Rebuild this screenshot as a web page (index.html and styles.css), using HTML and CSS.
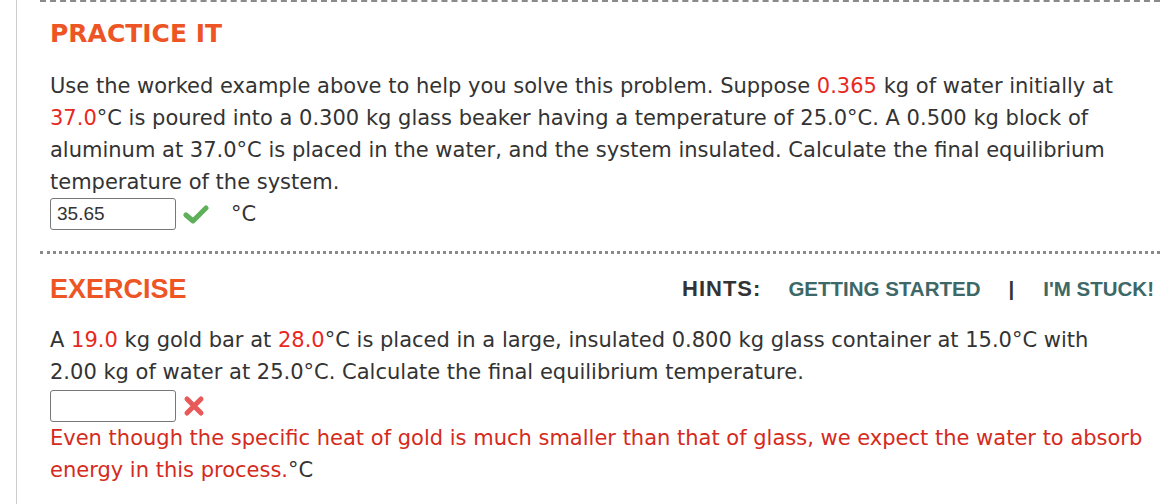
FILE: index.html
```html
<!DOCTYPE html>
<html>
<head>
<meta charset="utf-8">
<link rel="stylesheet" href="styles.css">
</head>
<body>
<div class="wrap">
  <section class="block practice">
    <h2 class="title">PRACTICE IT</h2>
    <p class="text">Use the worked example above to help you solve this problem. Suppose <span class="num">0.365</span> kg of water initially at <span class="num">37.0</span>°C is poured into a 0.300 kg glass beaker having a temperature of 25.0°C. A 0.500 kg block of aluminum at 37.0°C is placed in the water, and the system insulated. Calculate the final equilibrium temperature of the system.</p>
    <div class="answer">
      <div class="input">35.65</div>
      <svg class="icon" width="26" height="20" viewBox="0 0 26 20"><path d="M3 11 L10 17 L23 4" fill="none" stroke="#5fb05a" stroke-width="5" stroke-linecap="round" stroke-linejoin="round"/></svg>
      <span class="unit">°C</span>
    </div>
  </section>
  <section class="block exercise">
    <div class="head">
      <h2 class="title ex">EXERCISE</h2>
      <div class="hints">
        <span class="hl">HINTS:</span>
        <span class="hint">GETTING STARTED</span>
        <span class="sep">|</span>
        <span class="hint">I'M STUCK!</span>
      </div>
    </div>
    <p class="text">A <span class="num">19.0</span> kg gold bar at <span class="num">28.0</span>°C is placed in a large, insulated 0.800 kg glass container at 15.0°C with 2.00 kg of water at 25.0°C. Calculate the final equilibrium temperature.</p>
    <div class="answer">
      <div class="input"></div>
      <svg class="icon x" width="22" height="22" viewBox="0 0 22 22"><path d="M4 4 L18 18 M18 4 L4 18" fill="none" stroke="#e85a5a" stroke-width="5" stroke-linecap="round"/></svg>
    </div>
    <p class="text feedback">Even though the specific heat of gold is much smaller than that of glass, we expect the water to absorb energy in this process.<span class="dark">°C</span></p>
  </section>
</div>
</body>
</html>
```
FILE: styles.css
```css
html, body {
  margin: 0;
  padding: 0;
  background: #fff;
}
body {
  font-family: "DejaVu Sans", Verdana, sans-serif;
  color: #333;
  overflow: hidden;
}
.wrap {
  margin-left: 16px;
  border-left: 1px solid #ccc;
  padding-left: 23px;
  height: 504px;
}
.block {
  padding-left: 10px;
}
.practice {
  border-top: 2px dashed #8a8a8a;
}
.exercise {
  border-top: 3px dotted #8a8a8a;
  margin-top: 21px;
}
.title {
  margin: 0;
  font-weight: bold;
  color: #ee5524;
  font-size: 25px;
  line-height: 30px;
}
.practice .title {
  margin-top: 17px;
}
.title.ex {
  font-family: "Liberation Sans", Arial, sans-serif;
  font-size: 27px;
}
.text {
  margin: 0;
  font-size: 21px;
  line-height: 32px;
  padding-right: 20px;
}
.practice .text {
  margin-top: 21px;
}
.num {
  color: #e8281e;
}
.answer {
  display: flex;
  align-items: center;
  height: 32px;
}
.input {
  box-sizing: border-box;
  width: 126px;
  height: 32px;
  border: 1px solid #777;
  border-radius: 3px;
  font-family: "Liberation Sans", Arial, sans-serif;
  font-size: 19px;
  line-height: 30px;
  padding-left: 6px;
  color: #333;
}
.icon {
  margin-left: 7px;
}
.unit {
  margin-left: 22px;
  font-size: 21px;
}
.head {
  display: flex;
  justify-content: space-between;
  align-items: center;
  margin-top: 20px;
}
.hints {
  font-family: "Liberation Sans", Arial, sans-serif;
  font-weight: bold;
  font-size: 20.5px;
  display: flex;
  align-items: baseline;
  padding-right: 6px;
}
.hl {
  color: #333;
  font-size: 22px;
  letter-spacing: 1px;
  margin-right: 27px;
}
.hint {
  color: #3d6868;
}
.sep {
  color: #333;
  margin: 0 29px 0 28px;
}
.exercise .text {
  margin-top: 20px;
}
.exercise .answer {
  margin-top: 2px;
}
.text.feedback {
  margin-top: 0;
  padding-right: 0;
  color: #d42a20;
}
.dark {
  color: #333;
}
```
